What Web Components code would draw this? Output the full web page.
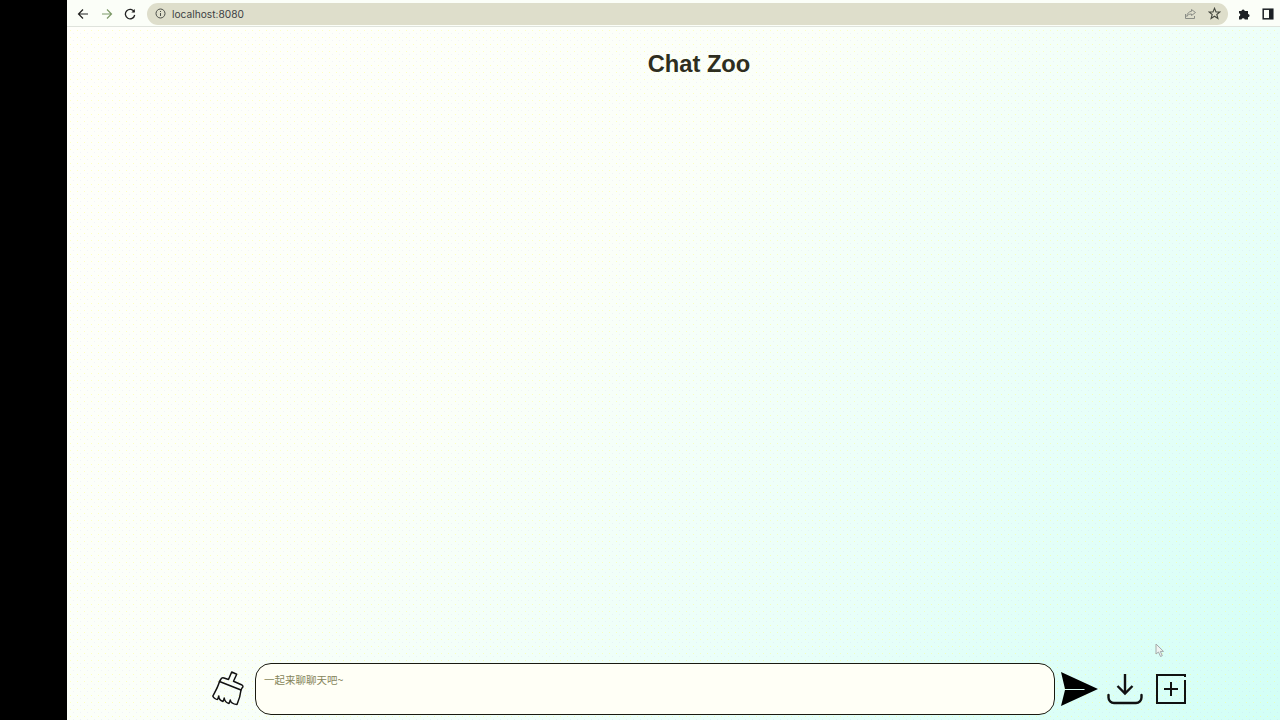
<!DOCTYPE html>
<html>
<head>
<meta charset="utf-8">
<title>Chat Zoo</title>
<style>
  html, body { margin: 0; height: 100%; overflow: hidden; background: #000; }
  body { display: flex; font-family: "Liberation Sans", "Noto Sans CJK SC", sans-serif; }
</style>
</head>
<body>
<browser-window>
  <chat-page></chat-page>
</browser-window>

<script>
const browserTemplate = document.createElement("template");
browserTemplate.innerHTML = `
  <style>
    :host{
      display: flex;
      flex-direction: column;
      flex: 1;
      margin-left: 67px;
      min-width: 0;
      background: #fff;
    }
    .bar{
      display: flex;
      align-items: center;
      height: 27px;
      flex: none;
      box-sizing: border-box;
      border-bottom: 1px solid #dfe3dc;
      background: #fbfef8;
      padding: 1px 6px 0 10px;
    }
    .nav{
      display: flex;
      align-items: center;
      gap: 11.500px;
      margin-right: 11px;
    }
    svg{ display: block; }
    .url{
      flex: 1;
      height: 22px;
      border-radius: 11px;
      background: #dedecb;
      display: flex;
      align-items: center;
      padding: 0 7px 0 8px;
      font: 10.200px "Inter", "Liberation Sans", sans-serif;
      color: #3c4043;
      gap: 6px;
    }
    .spacer{ flex: 1; }
    .ends{
      display: flex;
      align-items: center;
      gap: 11px;
    }
    .tools{
      display: flex;
      align-items: center;
      gap: 11px;
      margin-left: 10px;
    }
    .content{
      flex: 1;
      min-height: 0;
      display: flex;
    }
    ::slotted(*){ flex: 1; }
  </style>
  <div class="bar">
    <div class="nav">
      <svg width="12" height="12" viewBox="0 0 12 12" fill="none" stroke="#222" stroke-width="1.200"><path d="M11 6H1.500M6 1.500 1.500 6 6 10.500"/></svg>
      <svg width="12" height="12" viewBox="0 0 12 12" fill="none" stroke="#7d9a68" stroke-width="1.200"><path d="M1 6h9.500M6 1.500 10.500 6 6 10.500"/></svg>
      <svg width="12" height="12" viewBox="0 0 12 12" fill="none" stroke="#222" stroke-width="1.300"><path d="M10.300 4A4.700 4.700 0 1 0 10.700 7"/><path d="M10.800 1v3.400H7.400z" fill="#222" stroke="none"/></svg>
    </div>
    <div class="url">
      <svg width="11" height="11" viewBox="0 0 11 11" fill="none" stroke="#4a4d48"><circle cx="5.500" cy="5.500" r="4.500"/><path d="M5.500 5v3M5.500 3v1"/></svg>
      <span>localhost:8080</span>
      <span class="spacer"></span>
      <div class="ends">
        <svg width="13" height="12" viewBox="0 0 13 12" fill="none" stroke="#8a8d86"><path d="M1.500 6v4.500h9V8M7.500 1.500l4 3-4 3V6C5 6 3.500 7 2.800 8.500 3 5.500 5 3.500 7.500 3.300z"/></svg>
        <svg width="13" height="13" viewBox="0 0 13 13" fill="none" stroke="#45483f" stroke-width="1.100"><path d="M6.500 1.300 8 5h3.900l-3.100 2.500 1.100 4-3.400-2.300-3.400 2.300 1.100-4L1.100 5H5z"/></svg>
      </div>
    </div>
    <div class="tools">
      <svg width="13" height="13" viewBox="0 0 13 13" fill="#1c2024"><path d="M1 4h2.500a1.600 1.600 0 0 1 3.200 0H10v3a1.600 1.600 0 0 1 0 3.200V12.500H6.800a1.700 1.700 0 0 0-3.300 0H1V9.500a1.700 1.700 0 0 0 0-3.300z"/></svg>
      <svg width="12" height="12" viewBox="0 0 12 12" fill="none" stroke="#1c2024" stroke-width="1.500"><rect x="1.200" y="1.200" width="9.600" height="9.600"/><rect x="7" y="1" width="4" height="10" fill="#1c2024" stroke="none"/></svg>
    </div>
  </div>
  <div class="content"><slot></slot></div>
`;

class BrowserWindow extends HTMLElement {
  constructor() {
    super();
    this.attachShadow({ mode: "open" });
    this.shadowRoot.appendChild(browserTemplate.content.cloneNode(true));
  }
}

const chatPageTemplate = document.createElement("template");
chatPageTemplate.innerHTML = `
  <style>
    :host{
      display: flex;
      flex-direction: column;
      align-items: center;
      position: relative;
      padding-left: 51px;
      background-color: #ffffff;
      background-image:
        radial-gradient(circle, rgba(255,255,120,0.45) 0.8px, transparent 1px),
        radial-gradient(circle, rgba(190,190,240,0.18) 0.8px, transparent 1px),
        linear-gradient(135deg, #fffffb 0%, #fbfff9 40%, #e8fff9 72%, #d2fff6 100%);
      background-size: 7px 7px, 7px 7px, 100% 100%;
      background-position: 0 0, 3px 3px, 0 0;
    }
    .title{
      margin: 22px 0 0;
      font: bold 23.700px/30px "Liberation Sans", sans-serif;
      color: #2e2e20;
    }
    .grow{ flex: 1; }
    .cursor{
      position: absolute;
      left: 1088px;
      top: 616px;
    }
  </style>
  <h1 class="title">Chat Zoo</h1>
  <div class="grow"></div>
  <chat-input></chat-input>
  <svg class="cursor" width="11" height="15" viewBox="0 0 11 15" fill="#eef4f2" stroke="#a2a9aa"><path d="M1 1v10l2.500-2 2 4.500 1.800-.8-2-4.300H8.500z"/></svg>
`;

class ChatPage extends HTMLElement {
  constructor() {
    super();
    this.attachShadow({ mode: "open" });
    this.shadowRoot.appendChild(chatPageTemplate.content.cloneNode(true));
  }
}

const chatInputTemplate = document.createElement("template");
chatInputTemplate.innerHTML = `
  <style>
    :host{
      display: flex;
      align-items: center;
      margin-bottom: 5px;
      flex: none;
    }
    svg{ display: block; flex: none; }
    .box{
      width: 800px;
      height: 52px;
      box-sizing: border-box;
      margin: 0 5px 0 10px;
      border: 1.500px solid #1a1a10;
      border-radius: 16px;
      background: #fffff6;
      padding: 9px 8px;
      font: 10.500px/14px "Noto Sans CJK SC", sans-serif;
      color: #85855a;
    }
  </style>
  <svg width="33" height="36" viewBox="0 0 33 36" fill="none" stroke="#111" stroke-width="1.500" stroke-linejoin="round" stroke-linecap="round">
    <path d="M19.700 1 24.700 3.200 21.500 10.300 30 14C31.500 15 31 16.500 30 17L29 19 7.500 10.500 9 8C9.500 7 10.500 6.500 12 7L16.500 8.500Z"/>
    <path d="M7.500 10.500C6 16 3 21 .8 25C1.500 27 4 28.500 5.500 28.500C6 27.500 6.500 26.500 6.800 25C6.800 27 7.500 29.500 11 30.500C11.500 29.500 12 28.500 12.200 27C12.500 29 13.500 31.500 17 32.500C17.500 31.500 18 30.500 18.300 29C18.500 31 20 33 25 33.500C27 29 28.500 24 29 19"/>
  </svg>
  <div class="box">一起来聊聊天吧~</div>
  <svg width="38" height="36" viewBox="0 0 38 36" fill="#000"><path d="M1 1 38 18 1 35 5 19H24.500V18H5z"/></svg>
  <svg style="margin-left:9px" width="36" height="32" viewBox="0 0 36 32" fill="none" stroke="#111" stroke-width="2.400"><path d="M18 1V20M10.500 13 18 20.500 25.500 13"/><path d="M1.500 22v2.500a5.500 5.500 0 0 0 5.500 5.500h22a5.500 5.500 0 0 0 5.500-5.500V22" stroke-linecap="round"/></svg>
  <svg style="margin-left:13px" width="30" height="30" viewBox="0 0 30 30" fill="none" stroke="#111" stroke-width="2"><path d="M29 6V29H1V1H29V3"/><path d="M15 8V22M8 15H22"/></svg>
`;

class ChatInput extends HTMLElement {
  constructor() {
    super();
    this.attachShadow({ mode: "open" });
    this.shadowRoot.appendChild(chatInputTemplate.content.cloneNode(true));
  }
}

window.customElements.define("browser-window", BrowserWindow);
window.customElements.define("chat-page", ChatPage);
window.customElements.define("chat-input", ChatInput);
</script>
</body>
</html>
